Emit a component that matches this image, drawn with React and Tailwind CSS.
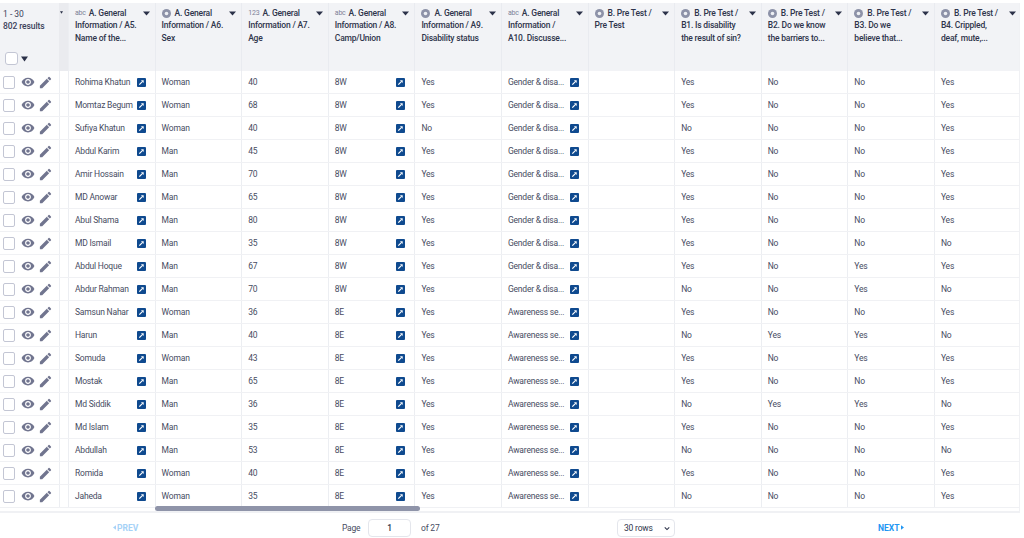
import React from "react";
import { MdVisibility, MdEdit } from "react-icons/md";

const G = "Gender & disa...";
const W = "Awareness se...";
const rows = [
  ["Rohima Khatun", "Woman", "40", "8W", "Yes", G, "Yes", "No", "No", "Yes"],
  ["Momtaz Begum", "Woman", "68", "8W", "Yes", G, "Yes", "No", "No", "Yes"],
  ["Sufiya Khatun", "Woman", "40", "8W", "No", G, "No", "No", "No", "Yes"],
  ["Abdul Karim", "Man", "45", "8W", "Yes", G, "Yes", "No", "No", "Yes"],
  ["Amir Hossain", "Man", "70", "8W", "Yes", G, "Yes", "No", "No", "Yes"],
  ["MD Anowar", "Man", "65", "8W", "Yes", G, "Yes", "No", "No", "Yes"],
  ["Abul Shama", "Man", "80", "8W", "Yes", G, "Yes", "No", "No", "Yes"],
  ["MD Ismail", "Man", "35", "8W", "Yes", G, "Yes", "No", "No", "No"],
  ["Abdul Hoque", "Man", "67", "8W", "Yes", G, "Yes", "No", "Yes", "Yes"],
  ["Abdur Rahman", "Man", "70", "8W", "Yes", G, "No", "No", "Yes", "No"],
  ["Samsun Nahar", "Woman", "36", "8E", "Yes", W, "Yes", "No", "No", "Yes"],
  ["Harun", "Man", "40", "8E", "Yes", W, "No", "Yes", "Yes", "No"],
  ["Somuda", "Woman", "43", "8E", "Yes", W, "Yes", "No", "Yes", "Yes"],
  ["Mostak", "Man", "65", "8E", "Yes", W, "Yes", "No", "No", "Yes"],
  ["Md Siddik", "Man", "36", "8E", "Yes", W, "No", "Yes", "Yes", "No"],
  ["Md Islam", "Man", "35", "8E", "Yes", W, "Yes", "No", "No", "Yes"],
  ["Abdullah", "Man", "53", "8E", "Yes", W, "No", "No", "No", "No"],
  ["Romida", "Woman", "40", "8E", "Yes", W, "Yes", "No", "No", "Yes"],
  ["Jaheda", "Woman", "35", "8E", "Yes", W, "No", "No", "No", "Yes"],
];

const headers = [
  ["abc", "A. General", ["Information / A5.", "Name of the..."]],
  ["radio", "A. General", ["Information / A6.", "Sex"]],
  ["123", "A. General", ["Information / A7.", "Age"]],
  ["abc", "A. General", ["Information / A8.", "Camp/Union"]],
  ["radio", "A. General", ["Information / A9.", "Disability status"]],
  ["abc", "A. General", ["Information /", "A10. Discusse..."]],
  ["radio", "B. Pre Test /", ["Pre Test"]],
  ["radio", "B. Pre Test /", ["B1. Is disability", "the result of sin?"]],
  ["radio", "B. Pre Test /", ["B2. Do we know", "the barriers to..."]],
  ["radio", "B. Pre Test /", ["B3. Do we", "believe that..."]],
  ["radio", "B. Pre Test /", ["B4. Crippled,", "deaf, mute,..."]],
];

const linkCols = new Set([0, 3, 5]);

function LinkIcon() {
  return (
    <svg viewBox="0 0 9 9" className="w-[9px] h-[9px] shrink-0">
      <rect width="9" height="9" rx="1" fill="#0f4a8f" />
      <path d="M2.3 6.7 L5.6 3.4" stroke="#fff" strokeWidth="1.2" />
      <path d="M3.9 2.3 H6.7 V5.1 Z" fill="#fff" />
    </svg>
  );
}

function Caret({ className }) {
  return (
    <svg viewBox="0 0 7 5" className={className} preserveAspectRatio="none">
      <path d="M0 0.5 H7 L3.5 4.5 Z" fill="#2b3148" />
    </svg>
  );
}

function TypeIcon({ type }) {
  if (type === "radio") {
    return (
      <svg viewBox="0 0 10 10" className="w-[9px] h-[9px] shrink-0 mr-[4px]">
        <circle cx="5" cy="5" r="5" fill="#8d92a8" />
        <circle cx="5" cy="5" r="2" fill="#eef0f4" />
      </svg>
    );
  }
  return <span className="text-[7px] tracking-[-0.2px] font-normal text-[#7d8298] mr-[3px] shrink-0">{type}</span>;
}

function Check({ className }) {
  return <div className={"border border-[#c3c6d4] rounded-[2px] bg-white shrink-0 " + className} />;
}

export default function App() {
  return (
    <div className="w-[1024px] h-[538px] bg-white overflow-hidden pt-[3px] font-['Roboto','Liberation_Sans',sans-serif] text-[8.5px] tracking-[-0.2px] leading-[12.3px]">
      <div className="relative w-[1020px] h-[510px] border-r border-b-2 border-[#f0f1f4] overflow-hidden">
        <div className="flex h-[68px] bg-[#f2f3f6]">
          <div className="w-[59px] shrink-0 flex flex-col justify-between pl-[3px] pb-[6px] pt-[5px] text-[#3b4159]">
            <div>
              <div className="tracking-normal">1 - 30</div>
              <div className="font-medium tracking-[-0.1px]">802 results</div>
            </div>
            <div className="flex items-center pl-[2px] gap-[3px]">
              <Check className="w-[13px] h-[13px] rounded-[3px]" />
              <Caret className="w-[7px] h-[6px]" />
            </div>
          </div>
          <div className="w-[10px] shrink-0 bg-[#eaebef] border-r border-[#eceef2] pl-[1px] pt-[8px]">
            <Caret className="w-[3px] h-[3px]" />
          </div>
          {headers.map(([t, first, lines], i) => (
            <div key={i} className="w-[86.6px] shrink-0 border-r border-[#e9ebf0] pl-[6px] pr-[5px] pt-[4px] font-medium text-[#2f354c] tracking-[-0.2px]">
              <div className="flex items-center">
                <TypeIcon type={t} />
                <span className="whitespace-nowrap">{first}</span>
                <Caret className="w-[7px] h-[5px] ml-auto shrink-0" />
              </div>
              {lines.map((l) => (
                <div key={l} className="whitespace-nowrap">{l}</div>
              ))}
            </div>
          ))}
        </div>
        {rows.map((r, ri) => (
          <div key={ri} className="flex h-[23px] border-b border-[#f0f1f4] text-[#474c62]">
            <div className="w-[59px] shrink-0 flex items-center pl-[3px] bg-white text-[#71758f] shadow-[1px_0_0_#eceef2]">
              <Check className="w-[12px] h-[13px]" />
              <MdVisibility className="w-[14px] h-[14px] ml-[6px]" />
              <MdEdit className="w-[15px] h-[15px] ml-[3px]" />
            </div>
            <div className="w-[10px] shrink-0 border-r border-[#eceef2]" />
            {[r[0], r[1], r[2], r[3], r[4], r[5], "", r[6], r[7], r[8], r[9]].map((v, ci) => (
              <div key={ci} className="w-[86.6px] shrink-0 border-r border-[#eceef2] flex items-center pl-[6px] pr-[9px] whitespace-nowrap">
                <span className={linkCols.has(ci) ? "mt-[1px]" : ""}>{v}</span>
                {linkCols.has(ci) && (
                  <span className="ml-auto pt-[1px]">
                    <LinkIcon />
                  </span>
                )}
              </div>
            ))}
          </div>
        ))}
        <div className="absolute left-[155px] top-[503px] w-[265px] h-[5px] rounded-full bg-[#8f94a9]" />
      </div>
      <div className="flex items-center h-[18px] mt-[6px] text-[#474c62]">
        <div className="w-[113px] shrink-0" />
        <div className="w-[229px] shrink-0 flex items-center font-bold text-[8.5px] tracking-normal text-[#a6d2f7]">
          <svg viewBox="0 0 4 6" className="w-[3px] h-[5px] mr-[1px]"><path d="M4 0 V6 L0 3 Z" fill="#a6d2f7" /></svg>
          PREV
        </div>
        <span className="w-[26px] shrink-0">Page</span>
        <input
          readOnly
          value="1"
          className="w-[43px] h-[18px] shrink-0 border border-[#e4e6ec] rounded-[4px] text-center font-medium text-[#2f354c] outline-none"
        />
        <span className="ml-[10px] w-[196px] shrink-0">of 27</span>
        <div className="w-[58px] h-[18px] shrink-0 border border-[#e4e6ec] rounded-[4px] pl-[6px] pr-[4px] text-[#2f354c] bg-white flex items-center justify-between">
          30 rows
          <svg viewBox="0 0 8 6" className="w-[6px] h-[5px]"><path d="M1 1.5 L4 4.5 L7 1.5" fill="none" stroke="#2b3148" strokeWidth="1.4" /></svg>
        </div>
        <div className="ml-[203px] flex items-center font-bold text-[8.5px] tracking-normal text-[#2196f3]">
          NEXT
          <svg viewBox="0 0 4 6" className="w-[3px] h-[5px] ml-[2px]"><path d="M0 0 V6 L4 3 Z" fill="#2196f3" /></svg>
        </div>
      </div>
    </div>
  );
}
